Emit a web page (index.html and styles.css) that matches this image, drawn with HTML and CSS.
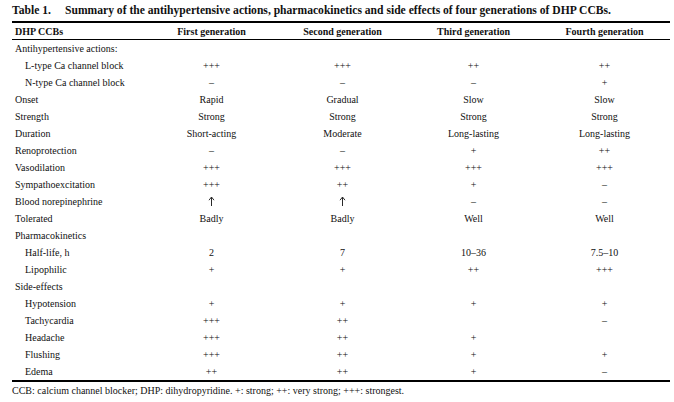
FILE: index.html
```html
<!DOCTYPE html>
<html>
<head>
<meta charset="utf-8">
<link rel="stylesheet" href="styles.css">
</head>
<body>
<div class="page">
  <p class="title"><span class="tnum">Table 1.</span>Summary of the antihypertensive actions, pharmacokinetics and side effects of four generations of DHP CCBs.</p>
  <table class="tbl">
    <thead>
      <tr><th class="lab">DHP CCBs</th><th>First generation</th><th>Second generation</th><th>Third generation</th><th>Fourth generation</th></tr>
    </thead>
    <tbody>
      <tr><td class="lab">Antihypertensive actions:</td><td></td><td></td><td></td><td></td></tr>
      <tr><td class="lab sub">L-type Ca channel block</td><td>+++</td><td>+++</td><td>++</td><td>++</td></tr>
      <tr><td class="lab sub">N-type Ca channel block</td><td>–</td><td>–</td><td>–</td><td>+</td></tr>
      <tr><td class="lab">Onset</td><td>Rapid</td><td>Gradual</td><td>Slow</td><td>Slow</td></tr>
      <tr><td class="lab">Strength</td><td>Strong</td><td>Strong</td><td>Strong</td><td>Strong</td></tr>
      <tr><td class="lab">Duration</td><td>Short-acting</td><td>Moderate</td><td>Long-lasting</td><td>Long-lasting</td></tr>
      <tr><td class="lab">Renoprotection</td><td>–</td><td>–</td><td>+</td><td>++</td></tr>
      <tr><td class="lab">Vasodilation</td><td>+++</td><td>+++</td><td>+++</td><td>+++</td></tr>
      <tr><td class="lab">Sympathoexcitation</td><td>+++</td><td>++</td><td>+</td><td>–</td></tr>
      <tr><td class="lab">Blood norepinephrine</td><td><svg class="arrow" viewBox="0 0 7 10" role="img" aria-label="↑"><path d="M3.5 10V1.5M1 4.2L3.5 1 6 4.2" fill="none" stroke="#111" stroke-width="0.9"/></svg></td><td><svg class="arrow" viewBox="0 0 7 10" role="img" aria-label="↑"><path d="M3.5 10V1.5M1 4.2L3.5 1 6 4.2" fill="none" stroke="#111" stroke-width="0.9"/></svg></td><td>–</td><td>–</td></tr>
      <tr><td class="lab">Tolerated</td><td>Badly</td><td>Badly</td><td>Well</td><td>Well</td></tr>
      <tr><td class="lab">Pharmacokinetics</td><td></td><td></td><td></td><td></td></tr>
      <tr><td class="lab sub">Half-life, h</td><td>2</td><td>7</td><td>10–36</td><td>7.5–10</td></tr>
      <tr><td class="lab sub">Lipophilic</td><td>+</td><td>+</td><td>++</td><td>+++</td></tr>
      <tr><td class="lab">Side-effects</td><td></td><td></td><td></td><td></td></tr>
      <tr><td class="lab sub">Hypotension</td><td>+</td><td>+</td><td>+</td><td>+</td></tr>
      <tr><td class="lab sub">Tachycardia</td><td>+++</td><td>++</td><td></td><td>–</td></tr>
      <tr><td class="lab sub">Headache</td><td>+++</td><td>++</td><td>+</td><td></td></tr>
      <tr><td class="lab sub">Flushing</td><td>+++</td><td>++</td><td>+</td><td>+</td></tr>
      <tr><td class="lab sub">Edema</td><td>++</td><td>++</td><td>+</td><td>–</td></tr>
    </tbody>
  </table>
  <p class="note">CCB: calcium channel blocker; DHP: dihydropyridine. +: strong; ++: very strong; +++: strongest.</p>
</div>
</body>
</html>
```

FILE: styles.css
```css
html, body {
  margin: 0;
  padding: 0;
  background: #fff;
}
body {
  font-family: "Liberation Serif", "Times New Roman", serif;
  color: #111;
}
.page {
  padding: 4px 7px 0 12px;
}
.title {
  margin: 0;
  height: 17px;
  line-height: 14px;
  font-size: 11.6px;
  font-weight: bold;
  white-space: nowrap;
}
.tnum {
  display: inline-block;
  width: 53px;
}
.tbl {
  width: 655px;
  border-collapse: collapse;
  table-layout: fixed;
  font-size: 10px;
}
.tbl thead tr {
  border-top: 2px solid #000;
  border-bottom: 1px solid #000;
}
.tbl tbody tr:last-child {
  border-bottom: 2px solid #000;
}
.tbl th, .tbl td {
  padding: 0;
  text-align: center;
  white-space: nowrap;
  width: 131px;
}
.tbl th {
  height: 16px;
  font-weight: bold;
}
.tbl td {
  height: 17px;
}
.tbl .lab {
  text-align: left;
  padding-left: 3px;
}
.tbl .sub {
  padding-left: 13px;
}
.arrow {
  display: inline-block;
  width: 7px;
  height: 10px;
  vertical-align: -1px;
}
.note {
  margin: 2px 0 0 0;
  font-size: 10px;
  line-height: 14px;
}
```
